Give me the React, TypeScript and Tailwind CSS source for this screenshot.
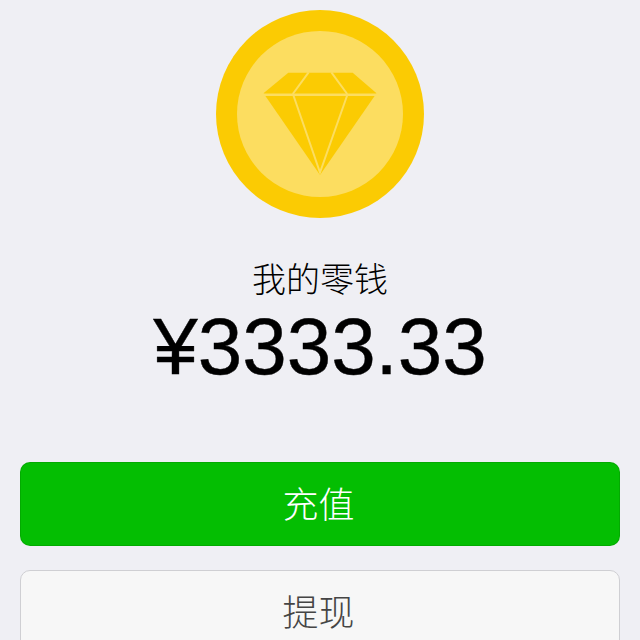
import React from 'react'

const fontStack = '[font-family:"Liberation_Sans","Noto_Sans_CJK_SC",sans-serif]'

function DiamondCoin() {
    return (
        <div className="flex h-[208px] w-[208px] items-center justify-center rounded-full bg-[#fbcb03]">
            <div className="h-[166px] w-[166px] rounded-full bg-[#fcdd60]">
                <svg viewBox="237 31 166 166" className="block h-full w-full">
                    <path d="M288.3 72.7H352.7L376.5 93.3L320 175L263.5 93.3Z" fill="#fbcb03" />
                    <g stroke="#fcdd60" strokeWidth="2" fill="none">
                        <path d="M262 94.7H378" strokeWidth="2.6" />
                        <path d="M308.6 72.3L292.8 94" />
                        <path d="M331.4 72.3L347.2 94" />
                        <path d="M293.3 95L320 172.5L347.3 95" />
                    </g>
                </svg>
            </div>
        </div>
    )
}

export default function App() {
    return (
        <div className={`h-[640px] w-[640px] overflow-hidden bg-[#efeff4] ${fontStack}`}>
            <div className="flex flex-col items-center pt-[10px]">
                <DiamondCoin />
                <p className="mt-[41px] text-[34px] leading-[42px] font-light text-black">我的零钱</p>
                <p className="text-[80px] leading-[92px] text-black [-webkit-text-stroke:0.4px_black]">¥3333.33</p>
            </div>

            {/* Buttons */}
            <div className="mt-[69px] flex flex-col gap-6 px-5">
                <button className="h-[84px] w-full rounded-[10px] border border-black/10 bg-[#04be02] pt-[4px] pr-[3px] text-[36px] font-light text-white">
                    充值
                </button>
                <button className="h-[84px] w-full rounded-[10px] border border-[#cfcfd3] bg-[#f7f7f7] pt-[4px] pr-[3px] text-[36px] font-light text-[#454545]">
                    提现
                </button>
            </div>
        </div>
    )
}
